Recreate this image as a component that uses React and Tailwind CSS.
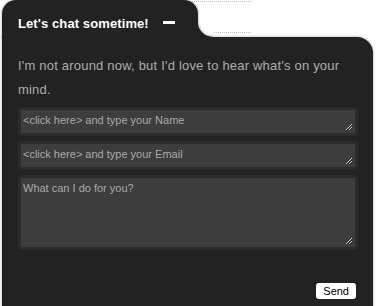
import React from 'react';

function Grip() {
  return (
    <svg className="absolute right-[2px] bottom-[2px]" width="8" height="8" viewBox="0 0 8 8">
      <path d="M1 7 L7 1 M4 7 L7 4" stroke="#d8d8d8" strokeWidth="1" />
      <path d="M2 7.5 L7.5 2 M5 7.5 L7.5 5" stroke="#111" strokeWidth="0.8" />
    </svg>
  );
}

function Field({ placeholder, tall }) {
  return (
    <div className="rounded-[3px] bg-[#2b2b2b] p-[3px]">
      <div className="relative">
        <textarea
          placeholder={placeholder}
          className={`block w-full resize-none bg-[#3d3d3d] px-[2px] pt-[3px] text-[11px] leading-[14px] text-[#b5b5b5] placeholder:text-[#a9a9a9] outline-none ${tall ? 'h-[69px]' : 'h-[23px]'}`}
        />
        <Grip />
      </div>
    </div>
  );
}

export default function App() {
  return (
    <div className="relative h-[306px] w-[378px] overflow-hidden bg-white" style={{ fontFamily: '"Liberation Sans", Arial, sans-serif' }}>
      {/* dotted lines behind the tab */}
      <div className="absolute left-[186px] top-[1px] w-[65px] border-t border-dotted border-[#c4c4c4]" />
      <div className="absolute left-[186px] top-[32px] w-[65px] border-t border-dotted border-[#c4c4c4]" />

      <div className="relative ml-[2px] w-[371px]">
        {/* Tab */}
        <div className="relative w-[196px] h-[37px] rounded-t-[14px] bg-[#222222] shadow-[0_0_2px_1px_rgba(0,0,0,0.18)] flex items-end pb-[5px] pl-[16px]">
          <span className="text-[13px] font-bold text-white leading-[16px] tracking-[0.1px]">Let's chat sometime!</span>
          <span className="ml-[14px] mb-[8px] h-[3px] w-[12px] bg-white" />
        </div>
        {/* Concave corner */}
        <div className="absolute left-[196px] top-[22px] h-[15px] w-[15px] bg-[#222222]">
          <div className="h-full w-full rounded-bl-[15px] bg-white shadow-[inset_1px_-1px_2px_rgba(0,0,0,0.18)]" />
        </div>

        {/* Body */}
        <div className="relative h-[269px] rounded-tr-[16px] bg-[#222222] shadow-[0_0_2px_1px_rgba(0,0,0,0.18)] px-[16px] pt-[17px]">
          <div className="absolute left-0 -top-[4px] h-[6px] w-[196px] bg-[#222222]" />
          <p className="relative text-[13px] leading-[24px] tracking-[0.2px] text-[#adadad]">
            I'm not around now, but I'd love to hear what's on your mind.
          </p>
          <div className="mt-[5px] mr-[-1px] flex flex-col gap-[5px]">
            <Field placeholder="<click here> and type your Name" />
            <Field placeholder="<click here> and type your Email" />
            <Field placeholder="What can I do for you?" tall />
          </div>
          <div className="mt-[33px] flex justify-end pr-[1px]">
            <button className="h-[16px] rounded-[3px] bg-white px-[7px] text-[11px] leading-[16px] text-black">Send</button>
          </div>
        </div>
      </div>
    </div>
  );
}
